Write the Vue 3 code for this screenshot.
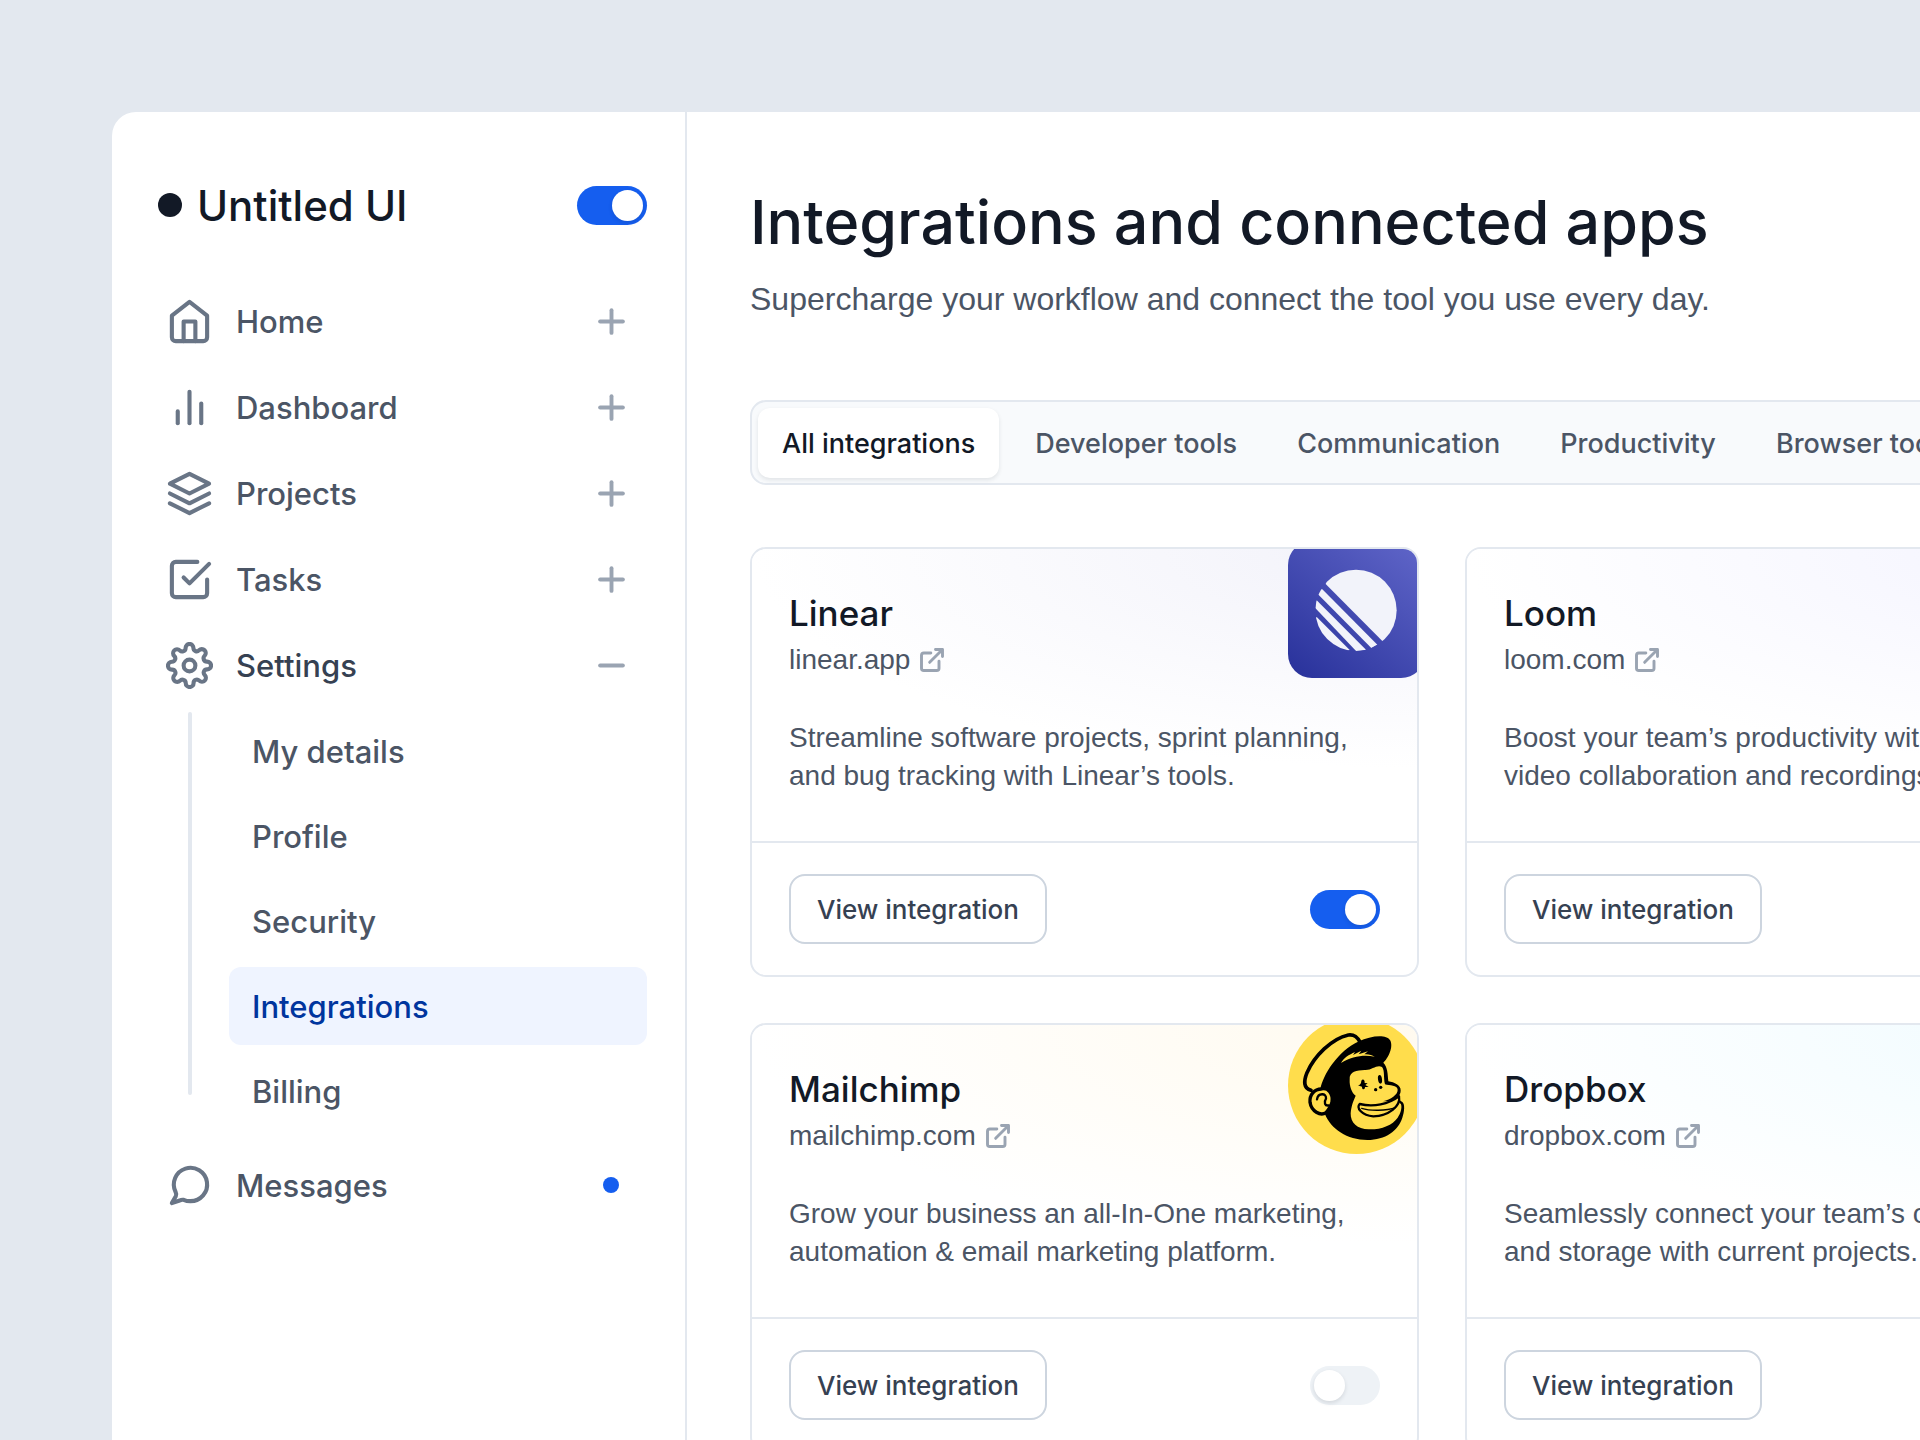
<template>
  <div class="page">
    <div class="window">
      <aside class="sidebar">
        <div class="brand">
          <span class="brand-dot"></span>
          <span class="brand-name">Untitled UI</span>
          <input v-model="enabled" class="toggle" type="checkbox" role="switch" aria-label="Untitled UI" />
        </div>

        <nav class="nav">
          <template v-for="item in nav" :key="item.label">
            <a href="#" class="nav-item" :class="{ open: item.children }">
              <svg class="nav-icon" viewBox="0 0 24 24" fill="none" stroke="currentColor" stroke-width="2.1" stroke-linecap="round" stroke-linejoin="round">
                <path v-for="d in item.icon" :key="d" :d="d" />
              </svg>
              <span class="nav-label">{{ item.label }}</span>
              <span v-if="item.unread" class="nav-unread"></span>
              <svg v-else class="nav-expand" viewBox="0 0 24 24" fill="none" stroke="currentColor" stroke-width="2.4" stroke-linecap="round">
                <path d="M5 12h14" />
                <path v-if="!item.children" d="M12 5v14" />
              </svg>
            </a>
            <div v-if="item.children" class="subnav">
              <a v-for="child in item.children" :key="child" href="#" class="subnav-item" :class="{ active: child === current }">{{ child }}</a>
            </div>
          </template>
        </nav>
      </aside>

      <main class="main">
        <h1>Integrations and connected apps</h1>
        <p class="lead">Supercharge your workflow and connect the tool you use every day.</p>

        <div class="tabs" role="tablist">
          <button
            v-for="tab in tabs"
            :key="tab"
            type="button"
            role="tab"
            class="tab"
            :class="{ active: tab === activeTab }"
            :aria-selected="tab === activeTab"
            @click="activeTab = tab"
          >{{ tab }}</button>
        </div>

        <div class="cards">
          <article v-for="app in apps" :key="app.name" class="card">
            <div class="card-body" :class="`tint-${app.id}`">
              <h2>{{ app.name }}</h2>
              <a href="#" class="card-link">
                {{ app.url }}
                <svg class="link-icon" viewBox="0 0 24 24" fill="none" stroke="currentColor" stroke-width="2.5" stroke-linecap="round" stroke-linejoin="round">
                  <path d="M18 13v6a2 2 0 0 1-2 2H5a2 2 0 0 1-2-2V8a2 2 0 0 1 2-2h6M15 3h6v6M10 14L21 3" />
                </svg>
              </a>
              <p class="card-text">{{ app.text[0] }}<br />{{ app.text[1] }}</p>

              <svg v-if="app.id === 'linear'" class="logo" viewBox="55 31 411 411">
                <defs>
                  <linearGradient id="linear-bg" x1="0.1" y1="1" x2="0.9" y2="0">
                    <stop offset="0" stop-color="#2a339c" />
                    <stop offset="1" stop-color="#5f65c8" />
                  </linearGradient>
                  <clipPath id="linear-disc"><circle cx="259" cy="239" r="122" /></clipPath>
                </defs>
                <rect x="55" y="31" width="411" height="411" rx="72" fill="url(#linear-bg)" />
                <g clip-path="url(#linear-disc)" fill="#f2f3fa">
                  <path d="M168 160L338 331L420 331L420 80L168 80z" />
                  <path d="M158 176L323 342L305 352L130 176z" />
                  <path d="M141 209L289 357L262 364L120 214z" />
                  <path d="M141 259L240 358L180 390L110 290z" />
                </g>
              </svg>

              <svg v-if="app.id === 'mailchimp'" class="logo" viewBox="55 30 411 411" fill="none" stroke-linecap="round" stroke-linejoin="round">
                <circle cx="260.500" cy="235.500" r="205.500" fill="#ffdd4c" />
                <!-- cap -->
                <path d="M124 250C101 244 102 222 112 197C134 147 186 95 236 84C255 81 264 92 272 106" stroke="#000" stroke-width="11" />
                <!-- head and brim -->
                <path d="M152 246C160 204 204 132 268 103C300 87 349 80 361 99C373 119 355 155 341 167C354 180 354 202 356 223C374 226 394 234 393 251C393 259 388 265 387 270C391 277 390 282 397 284C407 290 404 316 398 332C385 372 348 398 293 399C232 399 184 366 166 322z" fill="#000" />
                <path d="M214 168C222 153 238 143 256 135L250 144L275 131L267 142L295 133L284 142C297 141 307 144 315 149C284 143 247 147 214 168z" fill="#ffdd4c" />
                <!-- face -->
                <path d="M240 218C238 193 262 190 285 189C307 191 320 172 337 180C346 191 341 210 346 232C360 236 383 234 384 248C385 263 363 277 340 283C362 284 373 278 382 274C382 284 389 286 394 292C398 303 392 321 384 332C368 355 335 368 297 367C263 367 242 347 243 319C245 297 250 284 258 266C246 257 239 237 240 218z" fill="#ffdd4c" />
                <!-- smile -->
                <path d="M270 291C312 302 357 291 388 268C394 298 357 326 311 328C276 325 259 303 270 291z" fill="#ffdd4c" stroke="#000" stroke-width="7" />
                <path d="M276 304C300 312 350 312 378 302" stroke="#000" stroke-width="4" />
                <!-- eyes and nose -->
                <path d="M264 235C272 233 274 231 275 221C280 214 286 219 285 228L294 229L287 234L297 240L286 240C286 250 276 248 277 239z" fill="#000" />
                <ellipse cx="331" cy="217" rx="6" ry="13" transform="rotate(-8 331 217)" fill="#000" />
                <circle cx="318" cy="248" r="5" fill="#000" />
                <circle cx="333" cy="241" r="5" fill="#000" />
                <!-- ear -->
                <path d="M155 246C175 240 191 260 187 285C185 302 175 308 169 317C152 328 125 313 121 286C119 264 134 246 155 246z" fill="#ffdd4c" stroke="#000" stroke-width="10" />
                <path d="M142 277C145 257 171 257 169 275C162 286 165 298 178 295" stroke="#000" stroke-width="7" />
              </svg>
            </div>
            <div class="card-footer">
              <button type="button" class="button">View integration</button>
              <input v-model="app.on" class="toggle" type="checkbox" role="switch" :aria-label="app.name" />
            </div>
          </article>
        </div>
      </main>
    </div>
  </div>
</template>

<script setup>
import { reactive, ref } from 'vue'

const enabled = ref(true)
const current = ref('Integrations')
const activeTab = ref('All integrations')

const nav = [
  { label: 'Home', icon: ['M3 9l9-7 9 7v11a2 2 0 0 1-2 2H5a2 2 0 0 1-2-2z', 'M9 22V12h6v10'] },
  { label: 'Dashboard', icon: ['M18 20V10', 'M12 20V4', 'M6 20v-6'] },
  { label: 'Projects', icon: ['M12 2L2 7l10 5 10-5-10-5z', 'M2 17l10 5 10-5', 'M2 12l10 5 10-5'] },
  { label: 'Tasks', icon: ['M9 11l3 3L22 4', 'M21 12v7a2 2 0 0 1-2 2H5a2 2 0 0 1-2-2V5a2 2 0 0 1 2-2h11'] },
  {
    label: 'Settings',
    icon: [
      'M12 15a3 3 0 1 0 0-6 3 3 0 0 0 0 6z',
      'M19.4 15a1.65 1.65 0 0 0 .33 1.82l.06.06a2 2 0 0 1 0 2.83 2 2 0 0 1-2.83 0l-.06-.06a1.65 1.65 0 0 0-1.82-.33 1.65 1.65 0 0 0-1 1.51V21a2 2 0 0 1-2 2 2 2 0 0 1-2-2v-.09A1.65 1.65 0 0 0 9 19.4a1.65 1.65 0 0 0-1.82.33l-.06.06a2 2 0 0 1-2.83 0 2 2 0 0 1 0-2.83l.06-.06a1.65 1.65 0 0 0 .33-1.82 1.65 1.65 0 0 0-1.51-1H3a2 2 0 0 1-2-2 2 2 0 0 1 2-2h.09A1.65 1.65 0 0 0 4.6 9a1.65 1.65 0 0 0-.33-1.82l-.06-.06a2 2 0 0 1 0-2.83 2 2 0 0 1 2.83 0l.06.06a1.65 1.65 0 0 0 1.82.33H9a1.65 1.65 0 0 0 1-1.51V3a2 2 0 0 1 2-2 2 2 0 0 1 2 2v.09a1.65 1.65 0 0 0 1 1.51 1.65 1.65 0 0 0 1.82-.33l.06-.06a2 2 0 0 1 2.83 0 2 2 0 0 1 0 2.83l-.06.06a1.65 1.65 0 0 0-.33 1.82V9a1.65 1.65 0 0 0 1.51 1H21a2 2 0 0 1 2 2 2 2 0 0 1-2 2h-.09a1.65 1.65 0 0 0-1.51 1z',
    ],
    children: ['My details', 'Profile', 'Security', 'Integrations', 'Billing'],
  },
  { label: 'Messages', unread: true, icon: ['M12.500 20A8.500 8.500 0 1 0 4.900 15.300Q5.500 16.500 5 17.500L3 21l4-1.300q1-.6 2-.4a8.500 8.500 0 0 0 3.500.7z'] },
]

const tabs = ['All integrations', 'Developer tools', 'Communication', 'Productivity', 'Browser tools']

const apps = reactive([
  { id: 'linear', name: 'Linear', url: 'linear.app', on: true, text: ['Streamline software projects, sprint planning,', 'and bug tracking with Linear’s tools.'] },
  { id: 'loom', name: 'Loom', url: 'loom.com', on: true, text: ['Boost your team’s productivity with', 'video collaboration and recordings.'] },
  { id: 'mailchimp', name: 'Mailchimp', url: 'mailchimp.com', on: false, text: ['Grow your business an all-In-One marketing,', 'automation & email marketing platform.'] },
  { id: 'dropbox', name: 'Dropbox', url: 'dropbox.com', on: true, text: ['Seamlessly connect your team’s content', 'and storage with current projects.'] },
])
</script>

<style>
body {
  background: #e3e8ef;
}
</style>

<style scoped>
.page {
  box-sizing: border-box;
  height: 100vh;
  padding: 112px 0 0 112px;
  overflow: hidden;
  background: #e3e8ef;
  color: #4b5565;
  font-family: Inter, "Liberation Sans", sans-serif;
}

.page *,
.page *::before {
  box-sizing: border-box;
}

.window {
  display: flex;
  height: 100%;
  background: #fff;
  border-radius: 24px 0 0 0;
}

.sidebar {
  flex: 0 0 575px;
  padding: 64px 38px 0 45px;
  border-right: 2px solid #e3e8ef;
}

.brand {
  display: flex;
  align-items: center;
  height: 58px;
  margin-bottom: 48px;
}

.brand-dot {
  width: 24px;
  height: 24px;
  margin: 0 15px 0 1px;
  border-radius: 50%;
  background: #121926;
}

.brand-name {
  flex: 1;
  font-size: 42px;
  font-weight: 500;
  color: #121926;
}

.toggle {
  flex: none;
  appearance: none;
  width: 70px;
  height: 39px;
  margin: 0;
  padding: 4px;
  border-radius: 20px;
  background: #eef2f6;
}
.toggle::before {
  content: "";
  display: block;
  width: 31px;
  height: 31px;
  border-radius: 50%;
  background: #fff;
  box-shadow: 0 2px 4px rgba(18, 25, 38, 0.12);
}
.toggle:checked { background: #155eef; }
.toggle:checked::before { margin-left: auto; }

.nav {
  display: flex;
  flex-direction: column;
  gap: 8px;
}

.nav-item {
  display: flex;
  align-items: center;
  height: 78px;
  padding: 0 16px 0 9px;
  color: #4b5565;
  font-size: 31px;
  font-weight: 500;
  text-decoration: none;
}
.nav-item.open { color: #364152; }

.nav-icon {
  width: 47px;
  height: 47px;
  margin-right: 23px;
  color: #697586;
}

.nav-label {
  flex: 1;
}

.nav-expand {
  width: 39px;
  height: 39px;
  color: #9aa4b2;
}

.nav-unread {
  width: 16px;
  height: 16px;
  margin-right: 12px;
  border-radius: 50%;
  background: #155eef;
}

.subnav {
  position: relative;
  display: flex;
  flex-direction: column;
  gap: 7px;
  margin-bottom: 8px;
  padding-left: 72px;
}
.subnav::before {
  content: "";
  position: absolute;
  top: 0;
  bottom: 35px;
  left: 31px;
  width: 4px;
  border-radius: 2px;
  background: #e3e8ef;
}

.subnav-item {
  display: flex;
  align-items: center;
  height: 78px;
  padding: 0 23px;
  border-radius: 12px;
  color: #4b5565;
  font-size: 31px;
  font-weight: 500;
  text-decoration: none;
}
.subnav-item.active {
  background: #eff4ff;
  color: #00359e;
}

.main {
  flex: 1;
  min-width: 0;
  padding: 74px 0 0 63px;
  overflow: hidden;
}

h1 {
  margin: 0;
  color: #121926;
  font-size: 61px;
  font-weight: 500;
  line-height: 72px;
  white-space: nowrap;
}

.lead {
  margin: 17px 0 77px;
  font-family: "Liberation Sans", Arial, sans-serif;
  font-size: 32px;
  line-height: 48px;
  white-space: nowrap;
}

.tabs {
  display: flex;
  gap: 12px;
  width: max-content;
  min-width: 1385px;
  height: 85px;
  margin-bottom: 62px;
  padding: 6px;
  border: 2px solid #e3e8ef;
  border-radius: 16px;
  background: #f8fafc;
}

.tab {
  height: 70px;
  padding: 0 24px;
  border: 0;
  border-radius: 12px;
  background: none;
  color: #4b5565;
  font: 500 27px Inter, "Liberation Sans", sans-serif;
  white-space: nowrap;
}
.tab.active {
  background: #fff;
  color: #121926;
  box-shadow: 0 2px 4px rgba(18, 25, 38, 0.1);
}

.cards {
  display: grid;
  grid-template-columns: repeat(2, minmax(669px, 1fr));
  gap: 46px;
}

.card {
  overflow: hidden;
  border: 2px solid #e3e8ef;
  border-radius: 16px;
}

.card-body {
  position: relative;
  height: 292px;
  padding: 40px 37px 0;
}
.tint-linear { background: radial-gradient(100% 75% at 100% 0, #f2f2fa, #fff); }
.tint-loom { background: radial-gradient(100% 75% at 100% 0, #f3f3ff, #fff); }
.tint-mailchimp { background: radial-gradient(100% 75% at 100% 0, #fffaef, #fff); }
.tint-dropbox { background: radial-gradient(100% 75% at 100% 0, #effbff, #fff); }

h2 {
  margin: 0;
  color: #121926;
  font-size: 35px;
  font-weight: 500;
  line-height: 48px;
}

.card-link {
  display: flex;
  align-items: center;
  gap: 8px;
  color: #4b5565;
  font-family: "Liberation Sans", Arial, sans-serif;
  font-size: 28px;
  line-height: 46px;
  text-decoration: none;
}

.link-icon {
  width: 28px;
  height: 28px;
  color: #9aa4b2;
}

.card-text {
  margin: 36px 0 0;
  font-family: "Liberation Sans", Arial, sans-serif;
  font-size: 28px;
  line-height: 38px;
  white-space: nowrap;
}

.logo {
  position: absolute;
  top: -8px;
  right: -8px;
  width: 137px;
  height: 137px;
}

.card-footer {
  display: flex;
  align-items: center;
  justify-content: space-between;
  height: 134px;
  padding: 0 37px;
  border-top: 2px solid #e3e8ef;
}

.button {
  height: 70px;
  padding: 0 26px;
  border: 2px solid #cdd5df;
  border-radius: 16px;
  background: #fff;
  color: #364152;
  font: 500 26px Inter, "Liberation Sans", sans-serif;
}
</style>
